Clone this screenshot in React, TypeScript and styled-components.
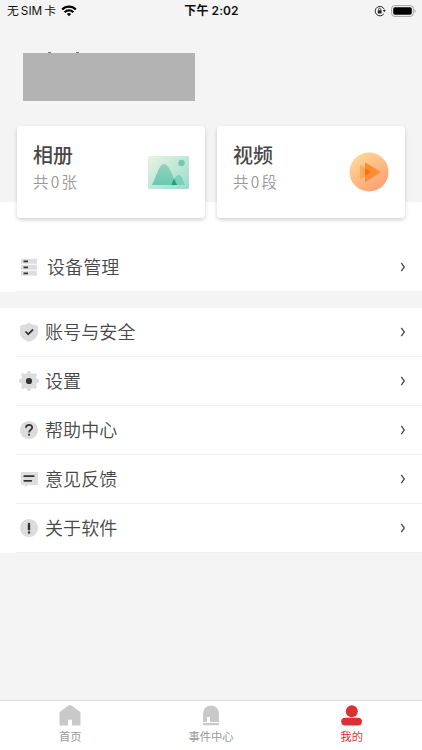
import React from 'react';
import styled, { createGlobalStyle } from 'styled-components';

const GlobalStyle = createGlobalStyle`
  * { box-sizing: border-box; }
  body {
    margin: 0;
    background: #f4f4f4;
    font-family: "Noto Sans CJK SC", sans-serif;
    color: #444;
  }
`;

const Screen = styled.div`
  display: flex;
  flex-direction: column;
  width: 422px;
  height: 750px;
  overflow: hidden;
  background: #f4f4f4;
`;

const Header = styled.header`
  height: 202px;
  flex: none;
`;

const StatusBar = styled.div`
  display: grid;
  grid-template-columns: 1fr auto 1fr;
  align-items: center;
  height: 22px;
  padding: 0 6px 0 7px;
  color: #111;
  font-family: Inter, "Noto Sans CJK SC", sans-serif;
  font-size: 11.8px;
  line-height: 22px;
`;

const Carrier = styled.div`
  display: flex;
  align-items: center;
  gap: 5px;
  white-space: nowrap;
`;

const CarrierName = styled.span`
  display: flex;
  gap: 2px;
`;

const Clock = styled.div`
  font-weight: 600;
  font-size: 12px;
  letter-spacing: 0.1px;
`;

const Indicators = styled.div`
  display: flex;
  justify-content: flex-end;
  align-items: center;
  gap: 5px;
`;

const Glyph = styled.svg`
  display: block;
  flex: none;
`;

const NameRow = styled.div`
  display: flex;
  gap: 25px;
  height: 31px;
  padding: 30px 0 0 48px;
`;

const NameMark = styled.span`
  width: 3px;
  height: 1px;
  background: #777;
`;

const Redacted = styled.div`
  width: 172px;
  height: 48px;
  margin-left: 23px;
  background: #b3b3b3;
`;

const Shelf = styled.section`
  height: 41px;
  flex: none;
  background: #fff;
`;

const Cards = styled.div`
  display: flex;
  gap: 12px;
  margin: -76px 17px 0;
`;

const Card = styled.article`
  display: flex;
  justify-content: space-between;
  flex: 1;
  height: 92px;
  padding: 16px 16px 0;
  border-radius: 4px;
  background: #fff;
  box-shadow: 0 2px 4px rgba(0, 0, 0, 0.18);
`;

const CardTitle = styled.h2`
  margin: 0;
  font-size: 20px;
  line-height: 26px;
  font-weight: 500;
  color: #484848;
`;

const CardCount = styled.p`
  margin: 1px 0 0;
  font-size: 15.5px;
  line-height: 24px;
  font-weight: 350;
  letter-spacing: 2.2px;
  color: #999;
`;

const Artwork = styled.div<{ $top: number }>`
  margin-top: ${(p) => p.$top}px;
`;

const List = styled.section<{ $gap?: number }>`
  margin-top: ${(p) => p.$gap ?? 0}px;
  background: #fff;
`;

const Item = styled.div<{ $wide?: boolean }>`
  display: flex;
  align-items: center;
  height: 49px;
  margin-left: 16px;
  padding: 0 15px 0 3px;
  gap: ${(p) => (p.$wide ? 8 : 6)}px;
  border-bottom: 1px solid #f0f0f0;
`;

const ItemLabel = styled.span`
  flex: 1;
  padding-bottom: 2px;
  font-size: 18px;
  line-height: 26px;
  font-weight: 350;
  letter-spacing: 0.1px;
  color: #484848;
`;

const TabBar = styled.nav`
  display: grid;
  grid-template-columns: repeat(3, 1fr);
  height: 50px;
  margin-top: auto;
  border-top: 1px solid #dcdcdc;
  background: #fff;
`;

const Tab = styled.div<{ $active?: boolean }>`
  display: flex;
  flex-direction: column;
  align-items: center;
  padding-top: 3px;
  font-size: 11.3px;
  line-height: 16px;
  color: ${(p) => (p.$active ? '#d93338' : '#999')};
  svg { margin-bottom: 2px; }
`;

const Wifi = () => (
  <Glyph width="16" height="12" viewBox="0 0 16 12" fill="none" stroke="#000" strokeWidth="2.3">
    <path d="M1.2 4.5a9.7 9.7 0 0 1 13.6 0M3.7 7.2a6.1 6.1 0 0 1 8.6 0" />
    <path d="M8 11.2 5.9 9a3 3 0 0 1 4.2 0Z" fill="#000" stroke="none" />
  </Glyph>
);

const RotationLock = () => (
  <Glyph width="12" height="12" viewBox="0 0 12 12" fill="none" stroke="#222" strokeWidth="1">
    <path d="M9.8 8.8A4.7 4.7 0 1 1 10.3 4.4" />
    <path d="m8.8 5.1 3 0-1.5 2.2z" fill="#222" stroke="none" />
    <rect x="3.8" y="5.3" width="3.8" height="3.1" rx=".4" fill="#222" stroke="none" />
    <path d="M4.6 5.5V4.3a1.1 1.1 0 0 1 2.2 0v1.2" strokeWidth=".8" />
  </Glyph>
);

const Battery = () => (
  <Glyph width="25" height="12" viewBox="0 0 25 12">
    <rect x=".6" y=".6" width="21.8" height="10.8" rx="3" fill="#f4f4f4" stroke="#a3a3a3" />
    <rect x="2.2" y="2.2" width="18.6" height="7.6" rx="1.7" fill="#000" />
    <path d="M23.6 4.2c1.3.5 1.3 3.1 0 3.6z" fill="#999" />
  </Glyph>
);

const AlbumArt = () => (
  <Glyph width="41" height="33" viewBox="0 0 41 33">
    <defs>
      <linearGradient id="sky" x1="0" y1="0" x2="1" y2="1">
        <stop stopColor="#e9f3e5" /><stop offset="1" stopColor="#97dccb" />
      </linearGradient>
      <linearGradient id="hill" x1="0" y1="0" x2="0" y2="1">
        <stop stopColor="#97d0bd" /><stop offset="1" stopColor="#66cab1" />
      </linearGradient>
    </defs>
    <rect width="41" height="33" rx="1.5" fill="url(#sky)" />
    <path d="M4 29C8 22 11 8 16 8s8 11 13 21Z" fill="url(#hill)" />
    <path d="M24 29c2-4 3-10 6.500-10S35 25 37 29Z" fill="#6ccbb0" opacity=".75" />
    <path d="M23.500 29c.8-2.500 1.500-4.800 2.600-6.500L29 29Z" fill="#1fa083" />
    <circle cx="33.500" cy="7" r="3.200" fill="#76c9b0" />
  </Glyph>
);

const VideoArt = () => (
  <Glyph width="40" height="40" viewBox="0 0 40 40">
    <defs>
      <linearGradient id="disc" x1=".15" y1="0" x2=".85" y2="1">
        <stop stopColor="#ffdb98" /><stop offset="1" stopColor="#ff9a70" />
      </linearGradient>
    </defs>
    <circle cx="20" cy="20" r="19.500" fill="url(#disc)" />
    <path d="M11.500 13.300 22 20l-10.500 6.700z" fill="#ffa04a" stroke="#ffa04a" strokeLinejoin="round" opacity=".75" />
    <path d="M16.500 11 31 20l-14.500 9.500z" fill="#ff8c32" stroke="#ff8c32" strokeLinejoin="round" />
    <path d="M16 16.200 22 20l-6 3.800z" fill="#f5701c" />
  </Glyph>
);

const DeviceIcon = () => (
  <Glyph width="20" height="20" viewBox="0 0 20 20">
    {[1.8, 7.8, 13.8].map((y) => (
      <React.Fragment key={y}>
        <rect x="2" y={y} width="16" height="5" rx=".6" fill="#dedede" />
        <rect x="4.500" y={y + 1.6} width="4.500" height="1.800" rx=".3" fill="#333" />
      </React.Fragment>
    ))}
  </Glyph>
);

const ShieldIcon = () => (
  <Glyph width="20" height="20" viewBox="0 0 20 20">
    <path d="M10 .4 12.300 2 18.500 3.500Q19 4 19 5v5c0 5-3.500 8-9 9.800C4.500 18 1 15 1 10V5q0-1 .5-1.500L7.700 2Z" fill="#dcdcdc" />
    <path d="m6.500 9.500 2.700 2.800 4.800-4.800" fill="none" stroke="#333" strokeWidth="1.800" />
  </Glyph>
);

const GearIcon = () => (
  <Glyph width="20" height="20" viewBox="0 0 20 20">
    {[0, 45, 90, 135].map((a) => (
      <rect key={a} x="8.100" y="0" width="3.800" height="20" rx="1.300" fill="#dcdcdc" transform={`rotate(${a} 10 10)`} />
    ))}
    <circle cx="10" cy="10" r="8.100" fill="#dcdcdc" />
    <circle cx="10" cy="10" r="3.100" fill="#333" />
  </Glyph>
);

const HelpIcon = () => (
  <Glyph width="20" height="20" viewBox="0 0 20 20">
    <circle cx="10" cy="10" r="9.100" fill="#dcdcdc" />
    <path d="M7 7.700C7 3.900 13.200 4 13.200 7.500c0 2.300-3.100 2.300-3.100 5" fill="none" stroke="#333" strokeWidth="1.800" />
    <rect x="9.100" y="13.700" width="2" height="2" rx=".6" fill="#333" />
  </Glyph>
);

const FeedbackIcon = () => (
  <Glyph width="20" height="20" viewBox="0 0 20 20">
    <path d="M2.500 3h15.700q.7 0 .7.7v11.600q0 .7-.7.7H9l-3.200 2.500V16H2.500q-.7 0-.7-.7V3.700q0-.7.7-.7" fill="#dedede" />
    <path d="M5.300 7.200h9.400M5.300 11.800h7" stroke="#333" strokeWidth="1.800" strokeLinecap="round" />
  </Glyph>
);

const AboutIcon = () => (
  <Glyph width="20" height="20" viewBox="0 0 20 20">
    <circle cx="10" cy="10" r="9.100" fill="#dcdcdc" />
    <path d="M10 6v5.300" stroke="#333" strokeWidth="2.400" strokeLinecap="round" />
    <circle cx="10" cy="14.500" r="1.200" fill="#333" />
  </Glyph>
);

const Chevron = () => (
  <Glyph width="8" height="10" viewBox="0 0 8 10">
    <path d="m2.300.8 3 4.200-3 4.200" fill="none" stroke="#484848" strokeWidth="1.300" />
  </Glyph>
);

const HomeIcon = () => (
  <Glyph width="24" height="22" viewBox="0 0 24 22">
    <path d="M12 1q.8 0 1.500.6l8.200 6q.8.600.8 1.500v11.400q0 1-1 1H14v-5.700h-4v5.700H2.500q-1 0-1-1V9.100q0-.9.8-1.500l8.200-6Q11.200 1 12 1" fill="#c9c9c9" />
  </Glyph>
);

const EventIcon = () => (
  <Glyph width="24" height="22" viewBox="0 0 24 22">
    <path d="M4 18V9.400a8 8 0 0 1 16 0V18h-9v-5H8v5Z" fill="#c9c9c9" />
    <rect x="4" y="19" width="16" height="2.200" rx=".5" fill="#c9c9c9" />
  </Glyph>
);

const UserIcon = () => (
  <Glyph width="24" height="22" viewBox="0 0 24 22" fill="#dc3035">
    <circle cx="11.800" cy="7.300" r="6" />
    <rect x="1.200" y="13.700" width="20.800" height="7.800" rx="3.900" />
  </Glyph>
);

const settings = [
  { label: '账号与安全', Icon: ShieldIcon },
  { label: '设置', Icon: GearIcon },
  { label: '帮助中心', Icon: HelpIcon },
  { label: '意见反馈', Icon: FeedbackIcon },
  { label: '关于软件', Icon: AboutIcon },
];

export default function App() {
  return (
    <>
      <GlobalStyle />
      <Screen>
        <Header>
          <StatusBar>
            <Carrier>
              <CarrierName><span>无</span><span>SIM</span><span>卡</span></CarrierName>
              <Wifi />
            </Carrier>
            <Clock>下午 2:02</Clock>
            <Indicators><RotationLock /><Battery /></Indicators>
          </StatusBar>
          <NameRow><NameMark /><NameMark /></NameRow>
          <Redacted />
        </Header>
        <Shelf>
          <Cards>
            <Card>
              <div><CardTitle>相册</CardTitle><CardCount>共0张</CardCount></div>
              <Artwork $top={14}><AlbumArt /></Artwork>
            </Card>
            <Card>
              <div><CardTitle>视频</CardTitle><CardCount>共0段</CardCount></div>
              <Artwork $top={10}><VideoArt /></Artwork>
            </Card>
          </Cards>
        </Shelf>
        <List>
          <Item $wide><DeviceIcon /><ItemLabel>设备管理</ItemLabel><Chevron /></Item>
        </List>
        <List $gap={16}>
          {settings.map(({ label, Icon }) => (
            <Item key={label}><Icon /><ItemLabel>{label}</ItemLabel><Chevron /></Item>
          ))}
        </List>
        <TabBar>
          <Tab><HomeIcon />首页</Tab>
          <Tab><EventIcon />事件中心</Tab>
          <Tab $active><UserIcon />我的</Tab>
        </TabBar>
      </Screen>
    </>
  );
}
